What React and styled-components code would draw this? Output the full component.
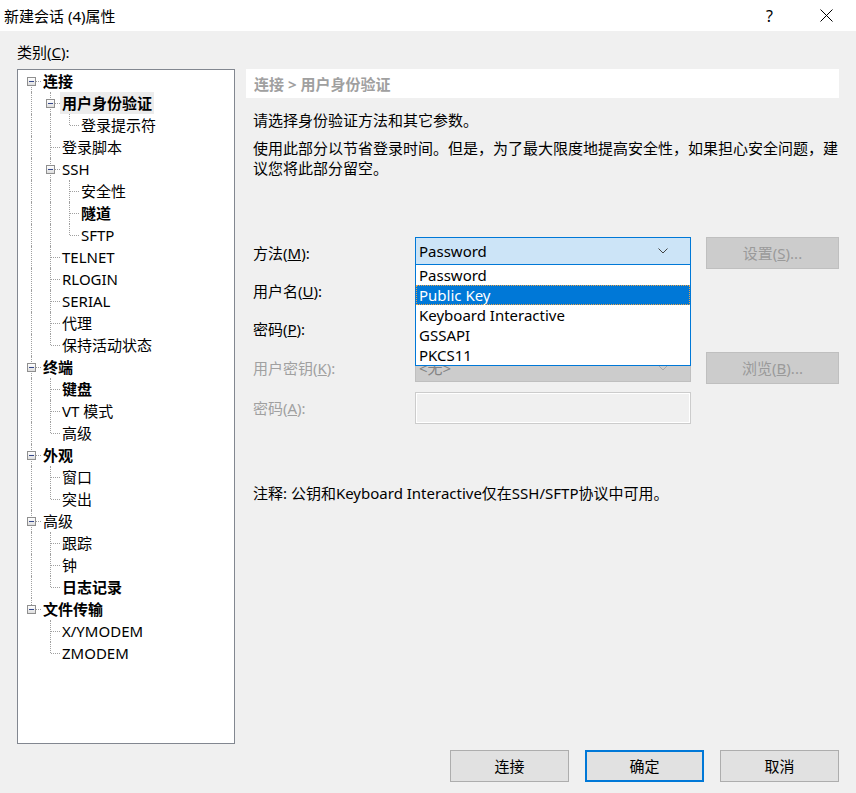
import React from "react";
import styled, { createGlobalStyle, css } from "styled-components";

const GlobalStyle = createGlobalStyle`
  html, body {
    margin: 0;
    padding: 0;
  }
  body {
    background: #f0f0f0;
    font-family: "Noto Sans", "Noto Sans CJK SC", sans-serif;
    font-size: 15px;
    line-height: 20px;
    color: #000;
  }
`;

const Window = styled.div`
  width: 856px;
  height: 793px;
  display: flex;
  flex-direction: column;
  background: #f0f0f0;
  overflow: hidden;
`;

const TitleBar = styled.div`
  height: 31px;
  flex-shrink: 0;
  background: #fff;
  display: flex;
  align-items: center;
  padding: 0 1px 0 4px;
`;

const Title = styled.div`
  flex: 1;
  font-size: 15px;
`;

const TitleButton = styled.div`
  width: 57px;
  height: 31px;
  display: flex;
  align-items: center;
  justify-content: center;
  font-size: 16px;
`;

const Body = styled.div`
  flex: 1;
  display: flex;
  flex-direction: column;
  padding: 0 17px;
`;

const CategoryLabel = styled.div`
  margin-top: 11px;
  height: 20px;
`;

const Main = styled.div`
  margin-top: 7px;
  height: 675px;
  display: flex;
  gap: 11px;
`;

/* ---------- tree ---------- */

const TreeBox = styled.div`
  width: 218px;
  box-sizing: border-box;
  border: 1px solid #828790;
  background: #fff;
`;

const TreeRow = styled.div`
  display: flex;
  align-items: center;
  height: 22px;
  padding-left: 4px;
`;

const Guide = styled.div`
  position: relative;
  width: 19px;
  height: 22px;
  flex-shrink: 0;

  ${(p) =>
    (p.$top || p.$bottom) &&
    css`
      &::before {
        content: "";
        position: absolute;
        left: 9px;
        top: ${p.$top ? "0" : "11px"};
        bottom: ${p.$bottom ? "0" : "11px"};
        border-left: 1px dotted #a0a0a0;
      }
    `}

  ${(p) =>
    p.$branch &&
    css`
      &::after {
        content: "";
        position: absolute;
        left: 10px;
        right: 0;
        top: 11px;
        border-top: 1px dotted #a0a0a0;
      }
    `}
`;

const Expander = styled.span`
  position: absolute;
  z-index: 1;
  left: 5px;
  top: 7px;
  width: 9px;
  height: 9px;
  box-sizing: border-box;
  border: 1px solid #8f8f8f;
  background: linear-gradient(#ffffff, #dedede);

  &::after {
    content: "";
    position: absolute;
    left: 1px;
    right: 1px;
    top: 3px;
    height: 1px;
    background: #36488a;
  }
`;

const NodeLabel = styled.span`
  padding: 0 2px;
  line-height: 22px;
  white-space: nowrap;
  font-weight: ${(p) => (p.$bold ? 700 : 400)};
  background: ${(p) => (p.$selected ? "#ececec" : "transparent")};
`;

/* ---------- right panel ---------- */

const Panel = styled.div`
  flex: 1;
  display: flex;
  flex-direction: column;
`;

const Breadcrumb = styled.div`
  height: 29px;
  background: #fff;
  display: flex;
  align-items: center;
  padding-left: 8px;
  font-weight: 700;
  color: #a0a0a0;
`;

const Text = styled.div`
  padding-left: 7px;
  margin-top: ${(p) => p.$mt}px;
`;

const Form = styled.div`
  margin-top: 58px;
  padding-left: 7px;
  display: flex;
  flex-direction: column;
`;

const FormRow = styled.div`
  height: ${(p) => p.$h}px;
  display: flex;
  align-items: center;
`;

const Label = styled.div`
  width: 162px;
  flex-shrink: 0;
  color: ${(p) => (p.$disabled ? "#a0a0a0" : "#000")};
`;

const SelectWrap = styled.div`
  position: relative;
  width: 276px;
  margin-bottom: ${(p) => p.$lift || 0}px;
`;

const Select = styled.div`
  height: 28px;
  box-sizing: border-box;
  display: flex;
  align-items: center;
  justify-content: space-between;
  padding: 0 22px 0 3px;
  border: 1px solid ${(p) => (p.$disabled ? "#bfbfbf" : "#0078d7")};
  background: ${(p) => (p.$disabled ? "#cccccc" : "#cce4f7")};
  color: ${(p) => (p.$disabled ? "#838383" : "#000")};
`;

const Input = styled.div`
  width: 276px;
  height: ${(p) => (p.$disabled ? 32 : 28)}px;
  box-sizing: border-box;
  border: 1px solid ${(p) => (p.$disabled ? "#cccccc" : "#7a7a7a")};
  background: ${(p) => (p.$disabled ? "#f0f0f0" : "#fff")};
  box-shadow: ${(p) => (p.$disabled ? "inset 0 0 0 1px #fff" : "none")};
`;

const SideButton = styled.div`
  margin-left: 15px;
  width: 133px;
  height: 32px;
  box-sizing: border-box;
  display: flex;
  align-items: center;
  justify-content: center;
  border: 1px solid #bfbfbf;
  background: #cccccc;
  color: #9a9a9a;
`;

const DropList = styled.div`
  position: absolute;
  z-index: 10;
  top: 28px;
  left: 0;
  width: 276px;
  box-sizing: border-box;
  border: 1px solid #0078d7;
  border-top: none;
  background: #fff;
`;

const DropItem = styled.div`
  height: 20px;
  line-height: 20px;
  padding-left: 3px;
  box-sizing: border-box;
  ${(p) =>
    p.$active &&
    css`
      background: #0078d7;
      color: #fff;
      outline: 1px dotted #e9a34a;
      outline-offset: -1px;
    `}
`;

/* ---------- footer ---------- */

const Footer = styled.div`
  margin-top: 6px;
  display: flex;
  justify-content: flex-end;
  gap: 16px;
`;

const Button = styled.div`
  width: 119px;
  height: 32px;
  box-sizing: border-box;
  display: flex;
  align-items: center;
  justify-content: center;
  background: #e1e1e1;
  border: ${(p) => (p.$primary ? "2px solid #0078d7" : "1px solid #adadad")};
`;

const Chevron = ({ color = "#444" }) => (
  <svg width="10" height="6" viewBox="0 0 10 6">
    <polyline points="0.5,0.5 5,5 9.5,0.5" fill="none" stroke={color} strokeWidth="1" />
  </svg>
);

const CloseIcon = () => (
  <svg width="13" height="13" viewBox="0 0 13 13">
    <line x1="0.5" y1="0.5" x2="12.5" y2="12.5" stroke="#000" strokeWidth="1" />
    <line x1="12.5" y1="0.5" x2="0.5" y2="12.5" stroke="#000" strokeWidth="1" />
  </svg>
);

const tree = [
  {
    label: "连接",
    bold: true,
    children: [
      { label: "用户身份验证", bold: true, selected: true, children: [{ label: "登录提示符" }] },
      { label: "登录脚本" },
      {
        label: "SSH",
        children: [{ label: "安全性" }, { label: "隧道", bold: true }, { label: "SFTP" }],
      },
      { label: "TELNET" },
      { label: "RLOGIN" },
      { label: "SERIAL" },
      { label: "代理" },
      { label: "保持活动状态" },
    ],
  },
  {
    label: "终端",
    bold: true,
    children: [{ label: "键盘", bold: true }, { label: "VT 模式" }, { label: "高级" }],
  },
  { label: "外观", bold: true, children: [{ label: "窗口" }, { label: "突出" }] },
  {
    label: "高级",
    children: [{ label: "跟踪" }, { label: "钟" }, { label: "日志记录", bold: true }],
  },
  {
    label: "文件传输",
    bold: true,
    children: [{ label: "X/YMODEM" }, { label: "ZMODEM" }],
  },
];

const flatten = (nodes, depth = 0, guides = [], out = []) => {
  nodes.forEach((n, i) => {
    const last = i === nodes.length - 1;
    out.push({ ...n, depth, guides, last, first: depth === 0 && i === 0 });
    if (n.children) flatten(n.children, depth + 1, [...guides, !last], out);
  });
  return out;
};

const rows = flatten(tree);

const methods = ["Password", "Public Key", "Keyboard Interactive", "GSSAPI", "PKCS11"];

const App = () => {
  return (
    <Window>
      <GlobalStyle />
      <TitleBar>
        <Title>新建会话 (4)属性</Title>
        <TitleButton>?</TitleButton>
        <TitleButton>
          <CloseIcon />
        </TitleButton>
      </TitleBar>

      <Body>
        <CategoryLabel>
          类别(<u>C</u>):
        </CategoryLabel>

        <Main>
          <TreeBox>
            {rows.map((row, idx) => (
              <TreeRow key={idx}>
                {row.guides.map((g, i) => (
                  <Guide key={i} $top={g} $bottom={g} />
                ))}
                <Guide $top={!row.first} $bottom={!row.last} $branch>
                  {row.children && <Expander />}
                </Guide>
                <NodeLabel $bold={row.bold} $selected={row.selected}>
                  {row.label}
                </NodeLabel>
              </TreeRow>
            ))}
          </TreeBox>

          <Panel>
            <Breadcrumb>连接 &gt; 用户身份验证</Breadcrumb>
            <Text $mt={12}>请选择身份验证方法和其它参数。</Text>
            <Text $mt={8}>
              使用此部分以节省登录时间。但是，为了最大限度地提高安全性，如果担心安全问题，建议您将此部分留空。
            </Text>

            <Form>
              <FormRow $h={34}>
                <Label>
                  方法(<u>M</u>):
                </Label>
                <SelectWrap $lift={4}>
                  <Select>
                    <span>Password</span>
                    <Chevron />
                  </Select>
                  <DropList>
                    {methods.map((m) => (
                      <DropItem key={m} $active={m === "Public Key"}>
                        {m}
                      </DropItem>
                    ))}
                  </DropList>
                </SelectWrap>
                <SideButton>
                  设置(<u>S</u>)...
                </SideButton>
              </FormRow>

              <FormRow $h={42}>
                <Label>
                  用户名(<u>U</u>):
                </Label>
                <Input />
              </FormRow>

              <FormRow $h={34}>
                <Label>
                  密码(<u>P</u>):
                </Label>
                <Input />
              </FormRow>

              <FormRow $h={44}>
                <Label $disabled>
                  用户密钥(<u>K</u>):
                </Label>
                <SelectWrap>
                  <Select $disabled>
                    <span>&lt;无&gt;</span>
                    <Chevron color="#a8a8a8" />
                  </Select>
                </SelectWrap>
                <SideButton>
                  浏览(<u>B</u>)...
                </SideButton>
              </FormRow>

              <FormRow $h={36}>
                <Label $disabled>
                  密码(<u>A</u>):
                </Label>
                <Input $disabled />
              </FormRow>
            </Form>

            <Text $mt={57}>注释: 公钥和Keyboard Interactive仅在SSH/SFTP协议中可用。</Text>
          </Panel>
        </Main>

        <Footer>
          <Button>连接</Button>
          <Button $primary>确定</Button>
          <Button>取消</Button>
        </Footer>
      </Body>
    </Window>
  );
};

export default App;
